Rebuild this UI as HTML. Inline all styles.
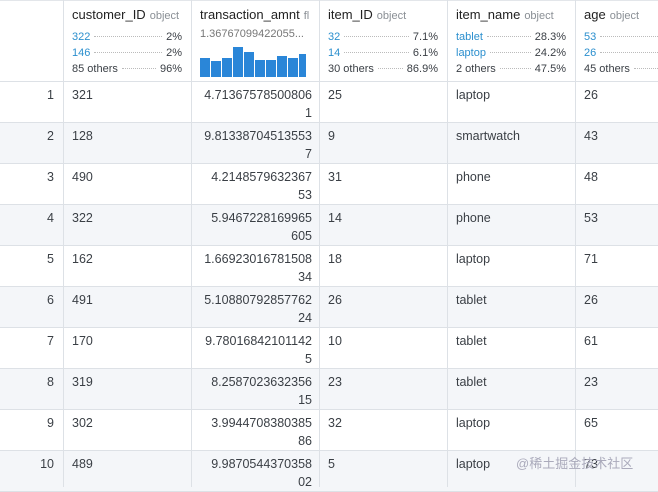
<!DOCTYPE html>
<html><head><meta charset="utf-8"><style>
*{margin:0;padding:0;box-sizing:border-box}
body{width:658px;height:487px;overflow:hidden;background:#fff;font-family:"Liberation Sans","Noto Sans CJK SC",sans-serif;color:#3a3f45;font-size:12px;position:relative}
.col{position:absolute;top:0;height:487px;border-left:1px solid #dde1e6}
.hdr{position:absolute;left:0;top:0;width:658px;height:82px;border-bottom:1px solid #dde1e6;border-top:1px solid #e3e6ea}
.row{position:absolute;left:0;width:658px;height:41px;border-bottom:1px solid #dde1e6}
.row.alt{background:#f4f6f9}
.t{position:absolute;font-size:12.5px;line-height:18px;white-space:nowrap}
.h{position:absolute;top:7px;font-size:13px;color:#222;white-space:nowrap}
.h span{font-size:11px;color:#8a8f95;margin-left:4px}
.s{position:absolute;font-size:11px;line-height:16px;white-space:nowrap;display:flex;align-items:baseline}
.s .k{color:#2b8fce}
.s .d{flex:1;border-bottom:1px dotted #bbb;margin:0 4px;transform:translateY(-3px)}
.bar{position:absolute;width:10px;background:#2a86d8;bottom:410px}
</style></head><body>
<div class="hdr"></div>
<div class="row" style="top:82px"></div>
<div class="row alt" style="top:123px"></div>
<div class="row" style="top:164px"></div>
<div class="row alt" style="top:205px"></div>
<div class="row" style="top:246px"></div>
<div class="row alt" style="top:287px"></div>
<div class="row" style="top:328px"></div>
<div class="row alt" style="top:369px"></div>
<div class="row" style="top:410px"></div>
<div class="row alt" style="top:451px"></div>
<div class="col" style="left:63px"></div>
<div class="col" style="left:191px"></div>
<div class="col" style="left:319px"></div>
<div class="col" style="left:447px"></div>
<div class="col" style="left:575px"></div>

<div class="h" style="left:72px">customer_ID<span>object</span></div>
<div class="h" style="left:200px;width:118px;overflow:hidden">transaction_amnt<span>fl</span></div>
<div class="h" style="left:328px">item_ID<span>object</span></div>
<div class="h" style="left:456px">item_name<span>object</span></div>
<div class="h" style="left:584px">age<span>object</span></div>

<div class="s" style="left:72px;top:29px;width:110px"><span class="k">322</span><span class="d"></span>2%</div>
<div class="s" style="left:72px;top:45px;width:110px"><span class="k">146</span><span class="d"></span>2%</div>
<div class="s" style="left:72px;top:61px;width:110px">85 others<span class="d"></span>96%</div>
<div class="s" style="left:200px;top:26px;color:#777">1.36767099422055...</div>
<div class="bar" style="left:200px;top:58px"></div>
<div class="bar" style="left:211px;top:61px"></div>
<div class="bar" style="left:222px;top:58px"></div>
<div class="bar" style="left:233px;top:47px"></div>
<div class="bar" style="left:244px;top:52px"></div>
<div class="bar" style="left:255px;top:60px"></div>
<div class="bar" style="left:266px;top:60px"></div>
<div class="bar" style="left:277px;top:56px"></div>
<div class="bar" style="left:288px;top:58px"></div>
<div class="bar" style="left:299px;top:54px;width:7px"></div>
<div class="s" style="left:328px;top:29px;width:110px"><span class="k">32</span><span class="d"></span>7.1%</div>
<div class="s" style="left:328px;top:45px;width:110px"><span class="k">14</span><span class="d"></span>6.1%</div>
<div class="s" style="left:328px;top:61px;width:110px">30 others<span class="d"></span>86.9%</div>
<div class="s" style="left:456px;top:29px;width:110px"><span class="k">tablet</span><span class="d"></span>28.3%</div>
<div class="s" style="left:456px;top:45px;width:110px"><span class="k">laptop</span><span class="d"></span>24.2%</div>
<div class="s" style="left:456px;top:61px;width:110px">2 others<span class="d"></span>47.5%</div>
<div class="s" style="left:584px;top:29px;width:110px"><span class="k">53</span><span class="d"></span></div>
<div class="s" style="left:584px;top:45px;width:110px"><span class="k">26</span><span class="d"></span></div>
<div class="s" style="left:584px;top:61px;width:110px">45 others<span class="d"></span></div>

<div id="rows"></div>
<script>
var d=[[321,"4.71367578500806","1",25,"laptop",26],[128,"9.81338704513553","7",9,"smartwatch",43],[490,"4.2148579632367","53",31,"phone",48],[322,"5.9467228169965","605",14,"phone",53],[162,"1.66923016781508","34",18,"laptop",71],[491,"5.10880792857762","24",26,"tablet",26],[170,"9.78016842101142","5",10,"tablet",61],[319,"8.2587023632356","15",23,"tablet",23],[302,"3.9944708380385","86",32,"laptop",65],[489,"9.9870544370358","02",5,"laptop",73]];
var h="";
d.forEach(function(r,i){var y=82+41*i+4;
h+='<div class="t" style="top:'+y+'px;right:604px">'+(i+1)+'</div>';
h+='<div class="t" style="top:'+y+'px;left:72px">'+r[0]+'</div>';
h+='<div class="t" style="top:'+y+'px;right:346px;text-align:right">'+r[1]+'<br>'+r[2]+'</div>';
h+='<div class="t" style="top:'+y+'px;left:328px">'+r[3]+'</div>';
h+='<div class="t" style="top:'+y+'px;left:456px">'+r[4]+'</div>';
h+='<div class="t" style="top:'+y+'px;left:584px">'+r[5]+'</div>';});
document.getElementById("rows").innerHTML=h;
</script>
<div class="t" style="left:516px;top:455px;color:#aab;font-size:13px">@稀土掘金技术社区</div>
</body></html>
